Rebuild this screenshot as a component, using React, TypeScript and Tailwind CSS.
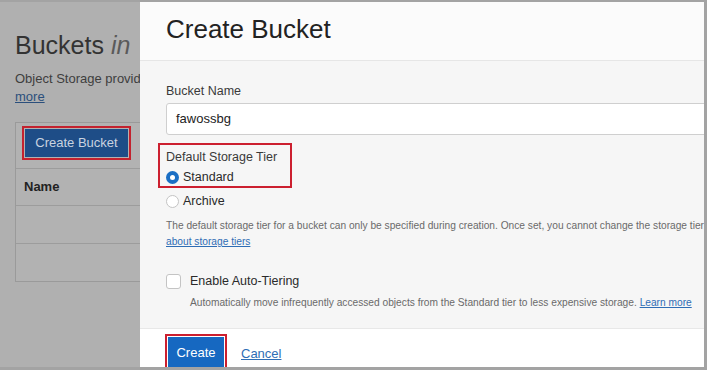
export default function App() {
  return (
    <div className="flex h-[370px] w-[707px] overflow-hidden bg-[#a3a3a3] pb-[3px] pr-[3px] pt-[2px] font-['Liberation_Sans',Arial,sans-serif]">
      {/* page under the overlay */}
      <div className="w-[140px] shrink-0 overflow-hidden bg-[#b0b0b0]">
        <div className="w-[320px] pl-[15px] pt-[28px]">
          <h1 className="whitespace-nowrap text-[25px] leading-[30px] text-[#333]">
            Buckets <span className="italic text-[#5a5a5a]">in</span>
          </h1>
          <p className="mt-[10px] text-[13px] leading-[18px] text-[#3e3e3e]">
            <span className="block whitespace-nowrap">Object Storage provides a place to store data. Learn</span>
            <span className="text-[#2b4f7c] underline">more</span>
          </p>
          <div className="mt-[16px] border border-[#9a9a9a] bg-[#b2b2b2]">
            <div className="border-b border-[#9c9c9c] pb-[8px] pl-[6px] pt-[3px]">
              <div className="inline-flex border-2 border-[#c3222e] p-px">
                <button className="h-[28px] w-[103px] bg-[#1e4d87] text-[13px] text-[#c9d3e0]">
                  Create Bucket
                </button>
              </div>
            </div>
            <div className="flex h-[37px] items-center border-b border-[#9c9c9c] pl-[8px] text-[13px] font-bold text-[#222]">
              Name
            </div>
            <div className="h-[38px] border-b border-[#9c9c9c]" />
            <div className="h-[37px]" />
          </div>
        </div>
      </div>

      {/* modal */}
      <div className="flex min-w-0 flex-1 flex-col overflow-hidden bg-white">
        <div className="h-[59px] shrink-0 border-b border-[#e6e6e6] bg-[#fbfbfb] pl-[26px] pt-[12px]">
          <h2 className="text-[26px] leading-[30px] text-[#222]">Create Bucket</h2>
        </div>

        <div className="flex-1 overflow-hidden bg-[#f6f6f6] pl-[26px] pt-[22px]">
          <div className="text-[12.5px] leading-[16px] text-[#3a3a3a]">Bucket Name</div>
          <div className="mt-[4px] flex h-[32px] w-[600px] items-center rounded-[3px] border border-[#cfcfcf] bg-white pl-[9px] text-[13px] text-[#222]">
            fawossbg
          </div>

          <div className="-ml-[8px] mt-[8px] w-[134px] border-2 border-[#cc1f2f] pb-[1px] pl-[6px] pt-[4px]">
            <div className="text-[12.5px] leading-[16px] text-[#3a3a3a]">Default Storage Tier</div>
            <div className="mt-[4px] flex h-[16px] items-center gap-[4px]">
              <span className="flex h-[13px] w-[13px] items-center justify-center rounded-full bg-[#1a6ec4]">
                <span className="h-[5px] w-[5px] rounded-full bg-white" />
              </span>
              <span className="text-[12.5px] text-[#2a2a2a]">Standard</span>
            </div>
          </div>

          <div className="mt-[5px] flex h-[16px] items-center gap-[4px]">
            <span className="h-[13px] w-[13px] rounded-full border border-[#c4c4c4] bg-white" />
            <span className="text-[12.5px] text-[#2a2a2a]">Archive</span>
          </div>

          <div className="mt-[9px] text-[10.2px] leading-[16px] text-[#6a6a6a]">
            <div className="whitespace-nowrap">
              The default storage tier for a bucket can only be specified during creation. Once set, you cannot change the storage tier.{' '}
              <span className="text-[#2f6db5] underline">Learn more</span>
            </div>
            <span className="text-[#2f6db5] underline">about storage tiers</span>
          </div>

          <div className="mt-[23px] flex h-[16px] items-center">
            <span className="h-[15px] w-[15px] rounded-[3px] border border-[#c4c4c4] bg-white" />
            <span className="ml-[9px] text-[12.5px] text-[#2a2a2a]">Enable Auto-Tiering</span>
          </div>
          <div className="ml-[24px] mt-[6px] whitespace-nowrap text-[10.2px] leading-[16px] text-[#6a6a6a]">
            Automatically move infrequently accessed objects from the Standard tier to less expensive storage.{' '}
            <span className="text-[#2f6db5] underline">Learn more</span>
          </div>
        </div>

        <div className="flex h-[39px] shrink-0 items-start gap-[14px] border-t border-[#e8e8e8] bg-white pl-[25px] pt-[5px]">
          <div className="border-2 border-[#cc1f2f] p-px">
            <button className="h-[31px] w-[56px] bg-[#1668c1] text-[13px] text-white">Create</button>
          </div>
          <span className="mt-[10px] text-[13px] text-[#2f6db5] underline">Cancel</span>
        </div>
      </div>
    </div>
  );
}
